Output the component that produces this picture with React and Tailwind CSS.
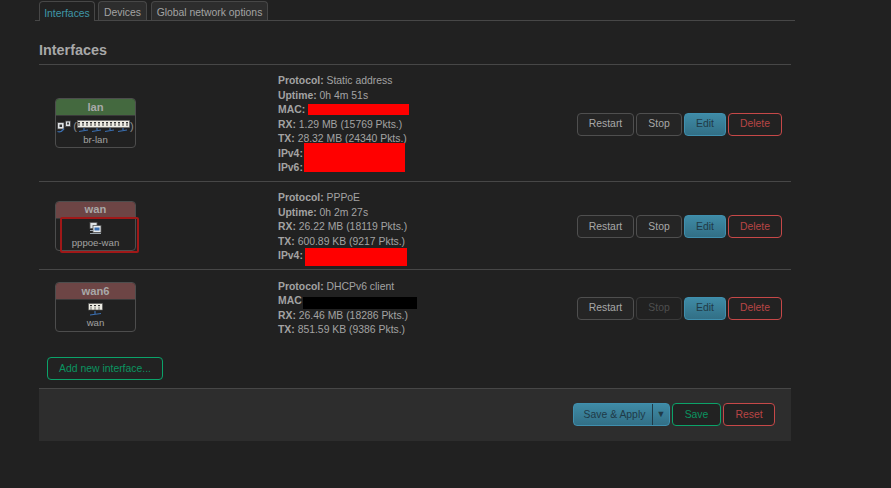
const SwitchStrip = () => (
  <svg width="53" height="13" viewBox="0 0 53 13">
    <rect x="0.500" y="0.500" width="52" height="7" fill="#ecebe2" stroke="#666" strokeWidth="0.6" />
    {[2, 6, 10, 14, 18, 22, 26, 30, 34, 38, 42, 46, 50].map((x) => (
      <path key={x} d={`M${x - 1} 2.500h2M${x} 3v3`} stroke="#333" strokeWidth="1" />
    ))}
    {[2, 15, 28, 41].map((x) => (
      <path key={x} d={`M${x} 11.500l9-1.500M${x + 5} 8v2`} stroke="#3b6fb0" strokeWidth="1.1" />
    ))}
  </svg>
);

const BridgeIcon = () => (
  <div className="flex items-center justify-center h-[14px] mt-[2px]">
    <svg width="14" height="13" viewBox="0 0 14 13">
      <rect x="0.500" y="2.500" width="6.500" height="6.500" fill="#dfe3e6" stroke="#444" strokeWidth="0.8" />
      <rect x="2.500" y="4.500" width="2.500" height="2.500" fill="#333" />
      <rect x="8.500" y="1" width="5" height="5.500" fill="#dfe3e6" stroke="#444" strokeWidth="0.8" />
      <rect x="10" y="2.500" width="2" height="2" fill="#444" />
      <path d="M0.500 11.500q3 1.500 6.500-2.500" stroke="#3b6fb0" strokeWidth="1.2" fill="none" />
    </svg>
    <div className="flex items-center h-[14px] ml-[2px] text-[#8f8f8f] text-[11px] leading-none">
      <span>(</span>
      <SwitchStrip />
      <span>)</span>
    </div>
  </div>
);

const PppoeIcon = () => (
  <svg width="13" height="13" viewBox="0 0 13 13" className="mx-auto mt-[2px] mb-[2px]">
    <rect x="1" y="0.500" width="7" height="6" fill="#dfe3e6" stroke="#555" strokeWidth="0.8" />
    <rect x="4" y="3.500" width="8" height="7" fill="#e8ecef" stroke="#555" strokeWidth="0.8" />
    <rect x="5.500" y="5.500" width="5" height="3" fill="#3b6fb0" />
    <path d="M1 8.500h3M1 11.500h11" stroke="#9aa4ac" strokeWidth="1.2" />
  </svg>
);

const EthIcon = () => (
  <svg width="15" height="13" viewBox="0 0 15 13" className="mx-auto mt-[2px]">
    <rect x="0.500" y="0.500" width="14" height="6.500" fill="#ecebe2" stroke="#555" strokeWidth="0.6" />
    <path d="M2 2.500h2M6 2.500h2M10 2.500h2" stroke="#333" strokeWidth="1.2" />
    <path d="M3 3.500v3.500M7 3.500v3.500M11 3.500v3.500" stroke="#555" strokeWidth="0.8" />
    <path d="M2 12l11-1.500M7 8v3" stroke="#3b6fb0" strokeWidth="1.2" />
  </svg>
);

function Badge({ name, head, sub, icon }) {
  return (
    <div className="w-[81px] h-[50px] ml-[16px] rounded-[4px] border border-[#4d4d4d] overflow-hidden flex flex-col">
      <div className={`h-[17px] shrink-0 flex items-center justify-center text-[11.2px] font-bold border-b border-[#3a3a3a] ${head}`}>
        {name}
      </div>
      <div className="flex-1 pt-[1px] text-center text-[9.6px] leading-[12px] text-[#a3a3a3]">
        {icon}
        <div className="mt-[1px]">{sub}</div>
      </div>
    </div>
  );
}

const Line = ({ label, children, colon = true }) => (
  <div className="h-[14.5px] leading-[14.5px] whitespace-nowrap">
    <span className="font-bold">{label}{colon ? ':' : ''}</span> {children}
  </div>
);

function Btn({ children, kind = 'plain', className = '' }) {
  const styles = {
    plain: 'border-[#4f4f4f] text-[#a8a8a8] bg-[#252525]',
    edit: 'border-[#3f8fae] text-[#1f3a47] bg-gradient-to-b from-[#3f8ba6] to-[#326f86]',
    del: 'border-[#c64848] text-[#b84545] bg-[#222222]',
    off: 'border-[#3a3a3a] text-[#4e4e4e] bg-[#212121]',
    save: 'border-[#0ba36a] text-[#0a9460] bg-[#222222]',
  };
  return (
    <button className={`h-[23px] pt-[1px] rounded-[4px] border text-[10.4px] leading-none ${styles[kind]} ${className}`}>
      {children}
    </button>
  );
}

function Actions({ stopOff }) {
  return (
    <div className="flex items-center gap-[2px] ml-auto mr-[9px] pt-[2px]">
      <Btn className="w-[57px]">Restart</Btn>
      <Btn className="w-[46px]" kind={stopOff ? 'off' : 'plain'}>Stop</Btn>
      <Btn className="w-[42px]" kind="edit">Edit</Btn>
      <Btn className="w-[54px]" kind="del">Delete</Btn>
    </div>
  );
}

function Row({ badge, lines, stopOff, height, children }) {
  return (
    <div className={`flex items-center border-b border-[#474747] ${height}`}>
      <div className="w-[239px] shrink-0">{badge}</div>
      <div className="relative pt-[4px] text-[10.4px] text-[#a3a3a3]">
        {lines}
        {children}
      </div>
      <Actions stopOff={stopOff} />
    </div>
  );
}

export default function App() {
  return (
    <div className="w-[891px] h-[488px] bg-[#212121] overflow-hidden font-['Liberation_Sans',Arial,sans-serif]">
      <div className="ml-[35px] w-[760px] h-[21px] pt-[1px] pl-[4px] flex text-[10.4px] border-b border-[#474747]">
        <div className="w-[56px] h-[20px] pt-[4px] flex items-center justify-center rounded-t-[4px] border border-b-0 border-[#474747] bg-[#212121] text-[#3f97a8]">Interfaces</div>
        <div className="ml-[3px] w-[49px] h-[19px] pt-[3px] flex items-center justify-center rounded-t-[4px] border border-b-0 border-[#474747] bg-[#2d2d2d] text-[#a3a3a3]">Devices</div>
        <div className="ml-[4px] w-[117px] h-[19px] pt-[3px] flex items-center justify-center rounded-t-[4px] border border-b-0 border-[#474747] bg-[#2d2d2d] text-[#a3a3a3]">Global network options</div>
      </div>

      <div className="relative ml-[39px] w-[752px]">
        <h2 className="h-[44px] pt-[21px] border-b border-[#474747] text-[14.4px] leading-[17px] font-bold text-[#a8a8a8]">Interfaces</h2>

        <Row
          height="h-[117px]"
          badge={<Badge name="lan" head="bg-[#44693f] text-[#a8a8a8]" sub="br-lan" icon={<BridgeIcon />} />}
          lines={
            <>
              <Line label="Protocol">Static address</Line>
              <Line label="Uptime">0h 4m 51s</Line>
              <Line label="MAC"></Line>
              <Line label="RX">1.29 MB (15769 Pkts.)</Line>
              <Line label="TX">28.32 MB (24340 Pkts.)</Line>
              <Line label="IPv4"></Line>
              <Line label="IPv6"></Line>
            </>
          }
        >
          <div className="absolute left-[30px] top-[34px] w-[101px] h-[11px] bg-[#ff0000]" />
          <div className="absolute left-[26px] top-[73px] w-[101px] h-[29px] bg-[#ff0000]" />
        </Row>

        <Row
          height="h-[88px]"
          badge={<Badge name="wan" head="bg-[#6d4545] text-[#a8a8a8]" sub="pppoe-wan" icon={<PppoeIcon />} />}
          lines={
            <>
              <Line label="Protocol">PPPoE</Line>
              <Line label="Uptime">0h 2m 27s</Line>
              <Line label="RX">26.22 MB (18119 Pkts.)</Line>
              <Line label="TX">600.89 KB (9217 Pkts.)</Line>
              <Line label="IPv4"></Line>
            </>
          }
        >
          <div className="absolute left-[27px] top-[61px] w-[102px] h-[18px] bg-[#ff0000]" />
        </Row>

        <div className="flex items-center h-[76px] pb-[2px]">
          <div className="w-[239px] shrink-0">
            <Badge name="wan6" head="bg-[#6d4545] text-[#a8a8a8]" sub="wan" icon={<EthIcon />} />
          </div>
          <div className="relative pt-[3px] text-[10.4px] text-[#a3a3a3]">
            <Line label="Protocol">DHCPv6 client</Line>
            <Line label="MAC" colon={false}></Line>
            <Line label="RX">26.46 MB (18286 Pkts.)</Line>
            <Line label="TX">851.59 KB (9386 Pkts.)</Line>
            <div className="absolute left-[25px] top-[20px] w-[114px] h-[12px] bg-black" />
          </div>
          <Actions stopOff />
        </div>

        {/* red annotation from the screenshot */}
        <div className="absolute left-[21px] top-[196px] w-[79px] h-[36px] border-2 border-[#a01818] rounded-[2px]" />

        <div className="h-[42px] pt-[9px] pl-[8px]">
          <Btn kind="save" className="w-[116px]">Add new interface...</Btn>
        </div>

        <div className="h-[53px] bg-[#2d2d2d] border-t border-[#474747] flex items-center justify-end pr-[16px] gap-[2px] pb-[1px]">
          <div className="flex h-[23px] w-[97px] rounded-[4px] border border-[#3f8fae] bg-gradient-to-b from-[#3f8ba6] to-[#326f86] text-[#1f3a47] text-[10.4px]">
            <div className="flex-1 flex items-center justify-center pl-[3px] pt-[1px] border-r border-[#1f3a47]">Save &amp; Apply</div>
            <div className="w-[16px] flex items-center justify-center text-[9px]">▼</div>
          </div>
          <Btn kind="save" className="w-[49px] bg-[#2a2a2a]">Save</Btn>
          <Btn kind="del" className="w-[52px] bg-[#2a2a2a]">Reset</Btn>
        </div>
      </div>
    </div>
  );
}
